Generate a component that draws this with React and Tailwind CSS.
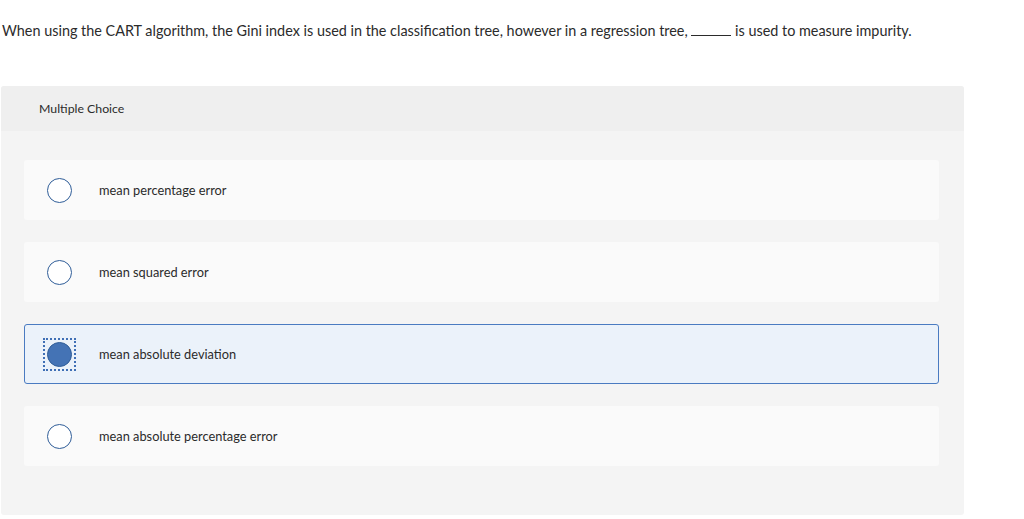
import React, { useState } from "react";

const options = [
  "mean percentage error",
  "mean squared error",
  "mean absolute deviation",
  "mean absolute percentage error",
];

const App = () => {
  const [selected, setSelected] = useState(2);

  return (
    <main className="h-[519px] w-[1024px] overflow-hidden bg-white font-['Lato','Liberation_Sans',sans-serif] text-[#2b2b2b]">
      <p className="px-[2px] pt-[22px] text-[14.4px] leading-[18px]">
        When using the CART algorithm, the Gini index is used in the classification tree, however in a regression tree,{" "}
        <span className="inline-block w-[40px] border-b border-[#2b2b2b] align-baseline"></span> is used to measure impurity.
      </p>

      <section className="mt-[46px] ml-px w-[963px] overflow-hidden rounded-[3px] bg-[#f4f4f4] pb-[49px]">
        <div className="flex h-[45px] items-center bg-[#efefef] px-[38px] pt-[2px] text-[12.3px]">Multiple Choice</div>

        <div className="flex flex-col gap-[22px] px-[23px] pt-[29px]">
          {options.map((opt, i) => {
            const active = i === selected;
            return (
              <button
                key={opt}
                type="button"
                onClick={() => setSelected(i)}
                className={
                  active
                    ? "flex h-[60px] w-[915px] items-center rounded-[3px] border border-[#4a7bc1] bg-[#ebf2fa] text-left"
                    : "flex h-[60px] w-[915px] items-center rounded-[3px] border border-transparent bg-[#fafafa] text-left"
                }
              >
                <span className="ml-[18px] flex h-[33px] w-[33px] items-center justify-center">
                  {active ? (
                    <span className="flex h-[33px] w-[33px] items-center justify-center border-2 border-dotted border-[#3f6fb5]">
                      <span className="h-[25px] w-[25px] rounded-full border border-[#2f5d98] bg-[#4473b5]"></span>
                    </span>
                  ) : (
                    <span className="h-[25px] w-[25px] rounded-full border-[1.5px] border-[#2f5d98] bg-white"></span>
                  )}
                </span>
                <span className="ml-[23px] pt-[2px] text-[12.8px]">{opt}</span>
              </button>
            );
          })}
        </div>
      </section>
    </main>
  );
};

export default App;
